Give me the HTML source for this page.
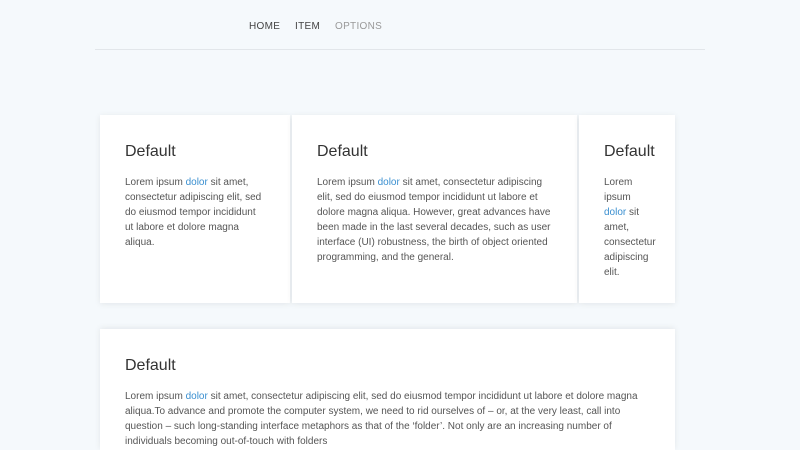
<!DOCTYPE html>
<html style="overflow:hidden"><head><style>
html,body{height:450px}
body{margin:0;width:800px;height:450px;overflow:hidden;background:#f5f9fc;font-family:"Liberation Sans",sans-serif;position:relative}
.nav{position:absolute;top:21px;font-size:10px;letter-spacing:.3px;color:#444}
.line{position:absolute;left:95px;top:49px;width:610px;height:1px;background:#e2e6ea}
.card{position:absolute;background:#fff;box-shadow:0 1px 6px rgba(0,0,0,.08);overflow:hidden}
.card h3{position:absolute;left:25px;top:28px;margin:0;font-weight:normal;font-size:16px;color:#333}
.card p{position:absolute;left:25px;top:60px;margin:0;font-size:10px;line-height:15px;color:#555}
.card a{color:#3a8fd0}
</style></head><body>
<div class="nav" style="left:249px">HOME</div>
<div class="nav" style="left:295px">ITEM</div>
<div class="nav" style="left:335px;color:#999">OPTIONS</div>
<div class="line"></div>
<div class="card" style="left:100px;top:115px;width:190px;height:188px"><h3>Default</h3><p style="width:138px">Lorem ipsum <a>dolor</a> sit amet, consectetur adipiscing elit, sed do eiusmod tempor incididunt ut labore et dolore magna aliqua.</p></div>
<div class="card" style="left:292px;top:115px;width:285px;height:188px"><h3>Default</h3><p style="width:240px">Lorem ipsum <a>dolor</a> sit amet, consectetur adipiscing elit, sed do eiusmod tempor incididunt ut labore et dolore magna aliqua. However, great advances have been made in the last several decades, such as user interface (UI) robustness, the birth of object oriented programming, and the general.</p></div>
<div class="card" style="left:579px;top:115px;width:96px;height:188px"><h3>Default</h3><p style="width:50px">Lorem ipsum <a>dolor</a> sit amet, consectetur adipiscing elit.</p></div>
<div class="card" style="left:100px;top:329px;width:575px;height:121px;box-shadow:0 -1px 6px rgba(0,0,0,.08)"><h3>Default</h3><p style="width:525px">Lorem ipsum <a>dolor</a> sit amet, consectetur adipiscing elit, sed do eiusmod tempor incididunt ut labore et dolore magna aliqua.To advance and promote the computer system, we need to rid ourselves of – or, at the very least, call into question – such long-standing interface metaphors as that of the ‘folder’. Not only are an increasing number of individuals becoming out-of-touch with folders</p></div>
</body></html>
